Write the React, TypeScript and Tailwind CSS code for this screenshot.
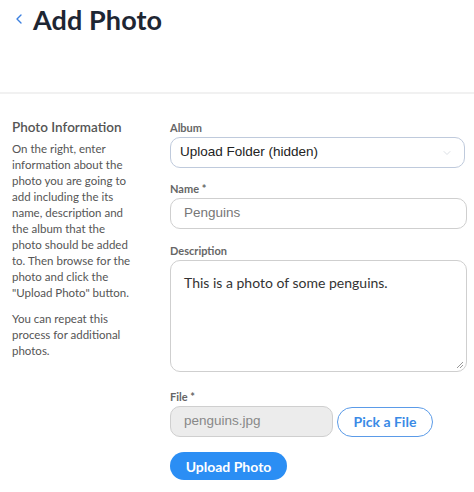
import { ChevronLeft, ChevronDown } from "lucide-react"

const label = "block text-[11px] leading-[14px] font-bold text-[#666] mb-[2px]"

export default function App() {
    return (
        <div className="w-[474px] h-[492px] bg-white overflow-hidden font-['Lato',sans-serif]">
            {/* header */}
            <div className="h-[92px] flex items-start pt-[1px] pl-[11px]">
                <div className="flex items-center h-[36px]">
                    <ChevronLeft className="w-[16px] h-[16px] text-[#3b7fe0] mr-[6px]" strokeWidth={2} />
                    <h1 className="text-[27px] font-bold text-[#1e2633] leading-none tracking-[0.1px]">Add Photo</h1>
                </div>
            </div>
            <div className="h-[2px] bg-[#f1f1f1]" />

            <div className="flex pt-[24px]">
                {/* sidebar */}
                <div className="w-[170px] shrink-0 pl-[12px] text-[#555]">
                    <h2 className="text-[13.5px] leading-[18px] font-semibold mb-[5px]">Photo Information</h2>
                    <p className="text-[11.5px] leading-[16px]">
                        On the right, enter<br />
                        information about the<br />
                        photo you are going to<br />
                        add including the its<br />
                        name, description and<br />
                        the album that the<br />
                        photo should be added<br />
                        to. Then browse for the<br />
                        photo and click the<br />
                        "Upload Photo" button.
                    </p>
                    <p className="text-[11.5px] leading-[16px] mt-[10px]">
                        You can repeat this<br />
                        process for additional<br />
                        photos.
                    </p>
                </div>

                {/* form */}
                <div className="w-[297px] pt-[3px]">
                    <label className={label}>Album</label>
                    <div className="w-[295px] h-[31px] rounded-[10px] border border-[#bfcadc] flex items-center justify-between pl-[9px] pr-[11px]">
                        <span className="text-[13.5px] text-[#222] font-['Liberation_Sans',sans-serif]">Upload Folder (hidden)</span>
                        <ChevronDown className="w-[12px] h-[12px] text-[#cfd4db]" strokeWidth={1.5} />
                    </div>

                    <label className={label + " mt-[14px]"}>Name *</label>
                    <div className="h-[31px] rounded-[10px] border border-[#cfcfcf] flex items-center pl-[13px]">
                        <span className="text-[13.5px] text-[#777] font-['Liberation_Sans',sans-serif]">Penguins</span>
                    </div>

                    <label className={label + " mt-[15px]"}>Description</label>
                    <div className="relative h-[112px] rounded-[10px] border border-[#cfcfcf] pl-[13px] pt-[9px]">
                        <span className="text-[14px] text-[#333]">This is a photo of some penguins.</span>
                        <svg className="absolute right-[2px] bottom-[2px]" width="8" height="8" viewBox="0 0 8 8">
                            <path d="M7 1 L1 7 M7 4 L4 7" stroke="#999" strokeWidth="1" />
                        </svg>
                    </div>

                    <label className={label + " mt-[18px]"}>File *</label>
                    <div className="flex items-center gap-[4px]">
                        <div className="w-[163px] h-[31px] rounded-[10px] border border-[#cfcfcf] bg-[#ececec] flex items-center pl-[13px]">
                            <span className="text-[13.5px] text-[#888] font-['Liberation_Sans',sans-serif]">penguins.jpg</span>
                        </div>
                        <button className="w-[96px] h-[30px] rounded-full border border-[#5b9be8] text-[#3a8ae6] text-[14px] font-bold">
                            Pick a File
                        </button>
                    </div>

                    <button className="mt-[15px] w-[117px] h-[28px] rounded-full bg-[#2b8ef4] text-white text-[14px] font-bold">
                        Upload Photo
                    </button>
                </div>
            </div>
        </div>
    )
}
